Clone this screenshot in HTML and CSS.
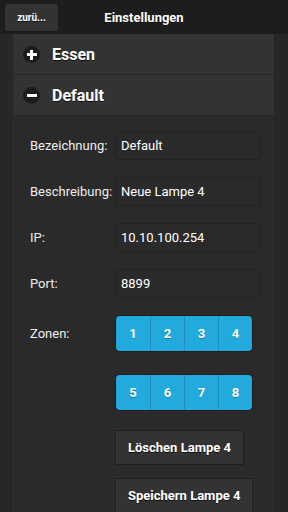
FILE: index.html
```html
<!DOCTYPE html>
<html lang="de">
<head>
  <meta charset="UTF-8" />
  <meta name="viewport" content="width=device-width, initial-scale=1.0" />
  <title>Einstellungen</title>
  <link rel="stylesheet" href="styles.css">
</head>
<body>
  <div class="header">
    <a class="back-btn">zurü...</a>
    <h1>Einstellungen</h1>
  </div>

  <div class="page">
    <div class="collapsible">
      <div class="coll-heading">
        <span class="icon plus"></span>
        Essen
      </div>
      <div class="coll-heading">
        <span class="icon minus"></span>
        Default
      </div>
      <div class="coll-content">
        <div class="field">
          <label>Bezeichnung:</label>
          <input type="text" value="Default">
        </div>
        <div class="field">
          <label>Beschreibung:</label>
          <input type="text" value="Neue Lampe 4">
        </div>
        <div class="field">
          <label>IP:</label>
          <input type="text" value="10.10.100.254">
        </div>
        <div class="field">
          <label>Port:</label>
          <input type="text" value="8899">
        </div>
        <div class="field zones">
          <label>Zonen:</label>
          <div class="group">
            <button>1</button><button>2</button><button>3</button><button>4</button>
          </div>
        </div>
        <div class="field zones last">
          <label></label>
          <div class="group">
            <button>5</button><button>6</button><button>7</button><button>8</button>
          </div>
        </div>
        <div class="field action">
          <label></label>
          <button class="btn">Löschen Lampe 4</button>
        </div>
        <div class="field action">
          <label></label>
          <button class="btn">Speichern Lampe 4</button>
        </div>
      </div>
    </div>
  </div>
</body>
</html>
```

FILE: styles.css
```css
body {
  margin: 0;
  background: #272727;
  font-family: Roboto, "Noto Sans", sans-serif;
  color: #eee;
  overflow: hidden;
}
.header {
  height: 34px;
  background: #1d1d1d;
  display: flex;
  align-items: center;
}
.back-btn {
  margin-left: 5px;
  width: 53px;
  height: 27px;
  background: #333;
  border-radius: 3px;
  display: flex;
  align-items: center;
  justify-content: center;
  font-size: 10px;
  font-weight: bold;
  color: #fff;
  text-shadow: 0 1px 0 #111;
}
.header h1 {
  flex: 1;
  margin: 0 0 0 -58px;
  text-align: center;
  font-size: 13px;
  font-weight: bold;
  color: #fff;
  text-shadow: 0 1px 0 #111;
}
.page {
  padding: 0 14px;
}
.collapsible {
  border-left: 1px solid #303030;
  margin-left: -1px;
}
.coll-heading {
  height: 40px;
  background: #333;
  border-bottom: 1px solid #242424;
  display: flex;
  align-items: center;
  padding-left: 9px;
  font-size: 16px;
  font-weight: bold;
  color: #fff;
  text-shadow: 0 1px 0 #111;
}
.icon {
  width: 17px;
  height: 17px;
  border-radius: 50%;
  background: #1c1c1c;
  margin-right: 12px;
  position: relative;
}
.icon::before,
.icon::after {
  content: "";
  position: absolute;
  background: #fff;
  left: 4px;
  top: 7px;
  width: 10px;
  height: 3px;
}
.plus::after {
  left: 7px;
  top: 4px;
  width: 3px;
  height: 10px;
}
.minus::after {
  display: none;
}
.coll-content {
  background: #2a2a2a;
  padding: 15px 13px 0 16px;
  height: 420px;
}
.field {
  display: flex;
  align-items: center;
  margin-bottom: 17px;
}
.field label {
  width: 85px;
  flex: none;
  font-size: 13px;
  color: #eee;
}
.field input {
  flex: 1;
  width: 0;
  min-width: 0;
  height: 29px;
  box-sizing: border-box;
  background: #2a2a2a;
  border: 1px solid #222;
  border-radius: 4px;
  padding: 0 5px;
  font-family: Roboto, "Noto Sans", sans-serif;
  font-size: 13px;
  color: #fff;
  outline: none;
}
.zones {
  margin-top: 3px;
  margin-bottom: 22px;
}
.zones.last {
  margin-bottom: 19px;
}
.group {
  display: flex;
  border: 1px solid #1e1e1e;
  border-radius: 5px;
  overflow: hidden;
}
.group button {
  width: 34px;
  height: 35px;
  border: none;
  border-left: 1px solid #1d8fbf;
  background: #22aadd;
  color: #fff;
  font-family: Roboto, "Noto Sans", sans-serif;
  font-size: 13px;
  font-weight: bold;
  text-shadow: 0 1px 0 #1a7aa5;
}
.group button:first-child {
  border-left: none;
}
.action {
  margin-bottom: 13px;
}
.btn {
  height: 35px;
  padding: 0 12px;
  background: #333;
  border: 1px solid #1f1f1f;
  border-radius: 0;
  color: #fff;
  font-family: Roboto, "Noto Sans", sans-serif;
  font-size: 13px;
  font-weight: bold;
  text-shadow: 0 1px 0 #111;
}
```
